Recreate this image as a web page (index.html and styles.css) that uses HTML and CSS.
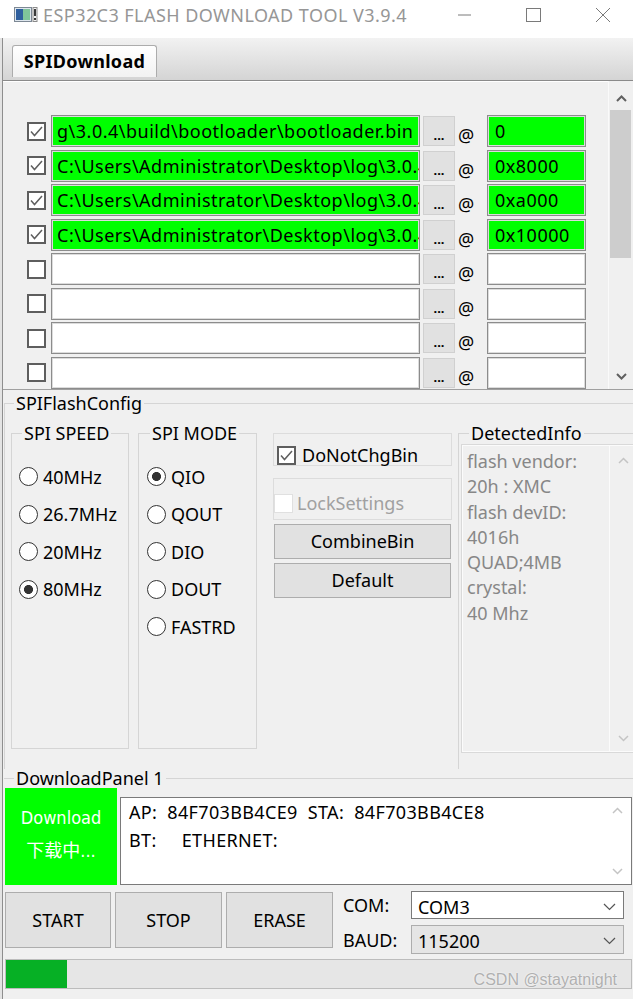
FILE: index.html
```html
<!doctype html>
<html lang="zh-CN">
<head>
<meta charset="UTF-8">
<title>ESP32C3 FLASH DOWNLOAD TOOL V3.9.4</title>
<link rel="stylesheet" href="styles.css">
</head>
<body>
<div class="window">
    <div class="titlebar">
        <svg class="app-icon" width="24" height="15" viewBox="0 0 24 15">
            <rect x="0.5" y="0.5" width="17" height="14" fill="#dfe7ee" stroke="#7d8894"/>
            <rect x="2" y="2" width="7" height="11" fill="#2f5f9e"/>
            <rect x="9" y="2" width="7" height="11" fill="#7fc49a"/>
            <rect x="19" y="0.5" width="4" height="14" fill="#f4f4f4" stroke="#8a8a8a"/>
            <rect x="20" y="2" width="2" height="7" fill="#3a3a3a"/>
            <rect x="20" y="11" width="2" height="2" fill="#3a3a3a"/>
        </svg>
        <span class="title">ESP32C3 FLASH DOWNLOAD TOOL V3.9.4</span>
        <div class="controls">
            <span class="ctl"><svg width="13" height="2"><path d="M0 1h13" stroke="#7a7a7a"/></svg></span>
            <span class="ctl"><svg width="15" height="14"><rect x="0.5" y="0.5" width="14" height="13" fill="none" stroke="#7a7a7a"/></svg></span>
            <span class="ctl"><svg width="16" height="16"><path d="M1 1l14 14M15 1L1 15" stroke="#7a7a7a"/></svg></span>
        </div>
    </div>

    <div class="body">
        <div class="frame">
            <div class="tabbar">
                <div class="tab">SPIDownload</div>
            </div>

            <div class="filelist">
                <div class="rows">
                    <div class="row">
                        <span class="chk"><svg width="15" height="15" viewBox="0 0 15 15"><path d="M2 7.5l3.5 4L13 3" fill="none" stroke="#5f5f5f" stroke-width="1.5"/></svg></span>
                        <div class="field path green">g\3.0.4\build\bootloader\bootloader.bin</div>
                        <div class="browse">...</div>
                        <span class="at">@</span>
                        <div class="field addr green">0</div>
                    </div>
                    <div class="row">
                        <span class="chk"><svg width="15" height="15" viewBox="0 0 15 15"><path d="M2 7.5l3.5 4L13 3" fill="none" stroke="#5f5f5f" stroke-width="1.5"/></svg></span>
                        <div class="field path green">C:\Users\Administrator\Desktop\log\3.0.4\build\partition_table\partition-table.bin</div>
                        <div class="browse">...</div>
                        <span class="at">@</span>
                        <div class="field addr green">0x8000</div>
                    </div>
                    <div class="row">
                        <span class="chk"><svg width="15" height="15" viewBox="0 0 15 15"><path d="M2 7.5l3.5 4L13 3" fill="none" stroke="#5f5f5f" stroke-width="1.5"/></svg></span>
                        <div class="field path green">C:\Users\Administrator\Desktop\log\3.0.4\build\ota_data_initial.bin</div>
                        <div class="browse">...</div>
                        <span class="at">@</span>
                        <div class="field addr green">0xa000</div>
                    </div>
                    <div class="row">
                        <span class="chk"><svg width="15" height="15" viewBox="0 0 15 15"><path d="M2 7.5l3.5 4L13 3" fill="none" stroke="#5f5f5f" stroke-width="1.5"/></svg></span>
                        <div class="field path green">C:\Users\Administrator\Desktop\log\3.0.4\build\app.bin</div>
                        <div class="browse">...</div>
                        <span class="at">@</span>
                        <div class="field addr green">0x10000</div>
                    </div>
                    <div class="row">
                        <span class="chk"></span>
                        <div class="field path"></div>
                        <div class="browse">...</div>
                        <span class="at">@</span>
                        <div class="field addr"></div>
                    </div>
                    <div class="row">
                        <span class="chk"></span>
                        <div class="field path"></div>
                        <div class="browse">...</div>
                        <span class="at">@</span>
                        <div class="field addr"></div>
                    </div>
                    <div class="row">
                        <span class="chk"></span>
                        <div class="field path"></div>
                        <div class="browse">...</div>
                        <span class="at">@</span>
                        <div class="field addr"></div>
                    </div>
                    <div class="row">
                        <span class="chk"></span>
                        <div class="field path"></div>
                        <div class="browse">...</div>
                        <span class="at">@</span>
                        <div class="field addr"></div>
                    </div>
                </div>
                <div class="vscroll">
                    <div class="arrow-box top"><svg width="11" height="7"><path d="M1 6l4.5-4.5L10 6" fill="none" stroke="#606060" stroke-width="2"/></svg></div>
                    <div class="thumb"></div>
                    <div class="arrow-box bottom"><svg width="11" height="7"><path d="M1 1l4.5 4.5L10 1" fill="none" stroke="#606060" stroke-width="2"/></svg></div>
                </div>
            </div>

            <fieldset class="group config">
                <legend>SPIFlashConfig</legend>
                <div class="config-body">
                    <fieldset class="group opt speed">
                        <legend>SPI SPEED</legend>
                        <div class="radio"><span class="dot"></span>40MHz</div>
                        <div class="radio"><span class="dot"></span>26.7MHz</div>
                        <div class="radio"><span class="dot"></span>20MHz</div>
                        <div class="radio"><span class="dot on"></span>80MHz</div>
                    </fieldset>
                    <fieldset class="group opt mode">
                        <legend>SPI MODE</legend>
                        <div class="radio"><span class="dot on"></span>QIO</div>
                        <div class="radio"><span class="dot"></span>QOUT</div>
                        <div class="radio"><span class="dot"></span>DIO</div>
                        <div class="radio"><span class="dot"></span>DOUT</div>
                        <div class="radio"><span class="dot"></span>FASTRD</div>
                    </fieldset>
                    <div class="middle">
                        <div class="nochg-box">
                            <span class="chk"><svg width="15" height="15" viewBox="0 0 15 15"><path d="M2 7.5l3.5 4L13 3" fill="none" stroke="#5f5f5f" stroke-width="1.5"/></svg></span>
                            <span class="chk-text">DoNotChgBin</span>
                        </div>
                        <div class="lock-box">
                            <span class="chk off"></span>
                            <span class="chk-text dim">LockSettings</span>
                        </div>
                        <div class="btn">CombineBin</div>
                        <div class="btn">Default</div>
                    </div>
                    <fieldset class="group detected">
                        <legend>DetectedInfo</legend>
                        <div class="info-box">
                            <div class="info-text">flash vendor:<br>20h : XMC<br>flash devID:<br>4016h<br>QUAD;4MB<br>crystal:<br>40 Mhz</div>
                            <div class="info-scroll">
                                <svg width="11" height="7"><path d="M1 6l4.5-4.5L10 6" fill="none" stroke="#c4c4c4" stroke-width="1.5"/></svg>
                                <svg width="11" height="7"><path d="M1 1l4.5 4.5L10 1" fill="none" stroke="#c4c4c4" stroke-width="1.5"/></svg>
                            </div>
                        </div>
                    </fieldset>
                </div>
            </fieldset>

            <fieldset class="group dl">
                <legend>DownloadPanel 1</legend>
                <div class="dl-top">
                    <div class="dl-status">Download<br>下载中...</div>
                    <div class="dl-log">
                        <div class="log-text">AP:  84F703BB4CE9  STA:  84F703BB4CE8
BT:     ETHERNET:</div>
                        <div class="info-scroll log-scroll">
                            <svg width="11" height="7"><path d="M1 6l4.5-4.5L10 6" fill="none" stroke="#c4c4c4" stroke-width="1.5"/></svg>
                            <svg width="11" height="7"><path d="M1 1l4.5 4.5L10 1" fill="none" stroke="#c4c4c4" stroke-width="1.5"/></svg>
                        </div>
                    </div>
                </div>
                <div class="dl-bottom">
                    <div class="big-btn">START</div>
                    <div class="big-btn">STOP</div>
                    <div class="big-btn">ERASE</div>
                    <div class="port">
                        <span class="port-label">COM:</span>
                        <div class="combo">COM3<svg width="13" height="8"><path d="M1 1l5.5 5.5L12 1" fill="none" stroke="#555" stroke-width="1.2"/></svg></div>
                        <span class="port-label">BAUD:</span>
                        <div class="combo gray">115200<svg width="13" height="8"><path d="M1 1l5.5 5.5L12 1" fill="none" stroke="#555" stroke-width="1.2"/></svg></div>
                    </div>
                </div>
            </fieldset>

            <div class="progress">
                <div class="bar"></div>
                <span class="watermark">CSDN @stayatnight</span>
            </div>
        </div>
    </div>
</div>
</body>
</html>
```

FILE: styles.css
```css
* {
    margin: 0;
    padding: 0;
    box-sizing: border-box;
}

html,
body {
    width: 633px;
    height: 999px;
    overflow: hidden;
    background: #f0f0f0;
}

body {
    font-family: "Noto Sans", "Noto Sans CJK SC", sans-serif;
    font-size: 18px;
    color: #000;
}

.window {
    width: 633px;
    height: 999px;
    overflow: hidden;
}

/* title bar */
.titlebar {
    height: 38px;
    padding-bottom: 9px;
    background: #fff;
    display: flex;
    align-items: center;
}

.app-icon {
    margin-left: 14px;
    flex: none;
}

.title {
    margin-left: 5px;
    color: #969696;
    font-size: 18px;
    letter-spacing: 0.45px;
    white-space: nowrap;
}

.controls {
    margin-left: auto;
    margin-right: -4px;
    display: flex;
}

.ctl {
    width: 69px;
    height: 29px;
    display: flex;
    align-items: center;
    justify-content: center;
}

/* window frame */
.body {
    height: 961px;
    border-left: 2px solid #e3e3e3;
}

.frame {
    height: 100%;
    border-left: 1px solid #8e8e8e;
}

.tabbar {
    height: 42px;
    padding: 7px 0 0 9px;
    background: linear-gradient(#f2f2f2, #d4d4d4);
}

.tab {
    width: 145px;
    height: 32px;
    border: 1px solid #acacac;
    border-bottom: none;
    border-radius: 3px 3px 0 0;
    background: linear-gradient(#fff, #f2f2f2);
    font-size: 18px;
    font-weight: bold;
    text-align: center;
    line-height: 30px;
    letter-spacing: 0.3px;
}

/* file rows */
.filelist {
    height: 310px;
    display: flex;
    border-top: 1px solid #8a8a8a;
    border-bottom: 1px solid #a0a0a0;
}

.rows {
    flex: 1;
    padding: 33px 0 0 24px;
    border-top: 1px solid #fff;
    overflow: hidden;
}

.row {
    display: flex;
    align-items: center;
    height: 32px;
    margin-bottom: 2.57px;
}

.chk {
    flex: none;
    width: 19px;
    height: 19px;
    border: 2px solid #5e5e5e;
    background: #fff;
    display: flex;
    align-items: center;
    justify-content: center;
}

.row .chk {
    margin-right: 5px;
}

.chk.off {
    border: 1px solid #e0e0e0;
}

.field {
    height: 32px;
    border: 1px solid #8c8c8c;
    box-shadow: inset 0 0 0 1px #dcdcdc;
    background: #fff;
    line-height: 30px;
    letter-spacing: 0.5px;
    white-space: nowrap;
    overflow: hidden;
}

.field.green {
    background-color: #00ff00;
}

.path {
    width: 369px;
    padding-left: 5px;
}

.addr {
    width: 99px;
    padding-left: 7px;
}

.browse {
    flex: none;
    width: 32px;
    height: 30px;
    margin-left: 3px;
    background: #e1e1e1;
    border: 1px solid #d0d0d0;
    font-size: 13px;
    font-weight: bold;
    text-align: center;
    line-height: 36px;
}

.at {
    width: 16px;
    margin: 8px 13px 0 3px;
}

.vscroll {
    width: 25px;
    border-left: 1px solid #fafafa;
    display: flex;
    flex-direction: column;
}

.arrow-box {
    height: 29px;
    display: flex;
    justify-content: center;
    align-items: center;
}

.arrow-box.top {
    padding-top: 5px;
}

.arrow-box.bottom {
    margin-top: auto;
    height: 26px;
}

.thumb {
    width: 21px;
    height: 148px;
    margin-left: 1px;
    background: #cdcdcd;
}

/* group boxes */
.group {
    border: 1px solid #d5d5d5;
    min-width: 0;
}

.group > legend {
    padding: 0 2px;
    font-size: 18px;
    line-height: 18px;
}

.config {
    width: 640px;
    margin: 4px 0 0 1px;
    padding: 12px 0 0 6px;
    border-right: none;
    border-bottom: none;
}

.config > legend {
    margin-left: 3px;
}

.config-body {
    display: flex;
    height: 345px;
}

.opt {
    height: 325px;
    padding: 16px 0 0 7px;
}

.opt > legend {
    margin-left: 3px;
}

.speed {
    width: 118px;
}

.mode {
    width: 119px;
    margin-left: 9px;
    padding-left: 8px;
}

.radio {
    height: 37.5px;
    display: flex;
    align-items: center;
}

.dot {
    width: 19px;
    height: 19px;
    margin-right: 5px;
    border: 1.5px solid #333;
    border-radius: 50%;
    background: #fff;
}

.dot.on {
    background: radial-gradient(circle, #333 0 4.2px, #fff 4.8px);
}

.middle {
    width: 179px;
    margin-left: 16px;
    padding-top: 9px;
}

.nochg-box {
    height: 33px;
    border: 1px solid #dcdcdc;
    padding: 11px 0 0 3px;
    display: flex;
    align-items: center;
}

.lock-box {
    height: 42px;
    margin-top: 12px;
    border: 1px solid #dcdcdc;
    padding-top: 8px;
    display: flex;
    align-items: center;
}

.chk-text {
    margin-left: 6px;
}

.chk-text.dim {
    margin-left: 4px;
    color: #a0a0a0;
}

.btn {
    width: 177px;
    height: 35px;
    margin: 4px 0 0 1px;
    background: #e1e1e1;
    border: 1px solid #adadad;
    text-align: center;
    line-height: 33px;
}

.detected {
    width: 180px;
    margin-left: 6px;
    padding-left: 2px;
    border-bottom: none;
    border-right: none;
}

.detected > legend {
    margin-left: 8px;
}

.info-box {
    height: 309px;
    margin-top: 2px;
    border: 1px solid #d9d9d9;
    box-shadow: inset 0 0 0 1px #fbfbfb;
    display: flex;
}

.info-text {
    flex: 1;
    padding: 4px 0 0 5px;
    color: #878787;
    line-height: 25.3px;
}

.info-scroll {
    width: 28px;
    border-left: 1px solid #fbfbfb;
    padding: 12px 0 10px;
    display: flex;
    flex-direction: column;
    justify-content: space-between;
    align-items: center;
}

/* download panel */
.dl {
    width: 629px;
    margin-left: 1px;
    padding-left: 1px;
    border: none;
    border-top: 1px solid #d5d5d5;
}

.dl > legend {
    margin-left: 9px;
}

.dl-top {
    display: flex;
    height: 97px;
    margin-top: 1px;
}

.dl-status {
    width: 112px;
    padding-top: 13px;
    background: #00ff00;
    color: #fff;
    font-family: "DejaVu Sans Condensed", "DejaVu Sans", "Noto Sans CJK SC", sans-serif;
    font-stretch: condensed;
    font-size: 18px;
    line-height: 33px;
    text-align: center;
}

.dl-log {
    flex: 1;
    height: 88px;
    margin: 9px 1px 0 3px;
    background: #fff;
    border: 1px solid #7a7a7a;
    display: flex;
}

.log-text {
    flex: 1;
    padding-left: 8px;
    line-height: 28px;
    letter-spacing: 0.35px;
    white-space: pre;
}

.log-scroll {
    border-left: none;
    padding: 9px 0 9px;
}

.dl-bottom {
    display: flex;
    height: 63px;
    margin-top: 6px;
}

.big-btn {
    width: 107px;
    height: 56px;
    margin: 1px 0 0 4px;
    background: #e1e1e1;
    border: 1px solid #adadad;
    text-align: center;
    line-height: 54px;
}

.big-btn:first-child {
    width: 106px;
    margin-left: 0;
}

.port {
    margin-left: 10px;
    display: grid;
    grid-template-columns: 68px 213px;
    grid-template-rows: 28px 29px;
    row-gap: 6px;
    align-items: center;
}

.combo {
    height: 100%;
    padding: 3px 7px 0 6px;
    background: #fff;
    border: 1px solid #7a7a7a;
    display: flex;
    align-items: center;
    justify-content: space-between;
}

.combo.gray {
    background: #e5e5e5;
    border-color: #adadad;
}

.progress {
    position: relative;
    width: 627px;
    height: 30px;
    margin: 5px 0 0 2px;
    background: #e6e6e6;
    border: 1px solid #bcbcbc;
}

.bar {
    width: 61px;
    height: 100%;
    background: #06b025;
}

.watermark {
    position: absolute;
    right: 14px;
    top: 11px;
    font-family: "Liberation Sans", sans-serif;
    font-size: 16px;
    line-height: 18px;
    color: #b0b0b0;
    text-shadow: 0 0 2px #fff;
}
```
